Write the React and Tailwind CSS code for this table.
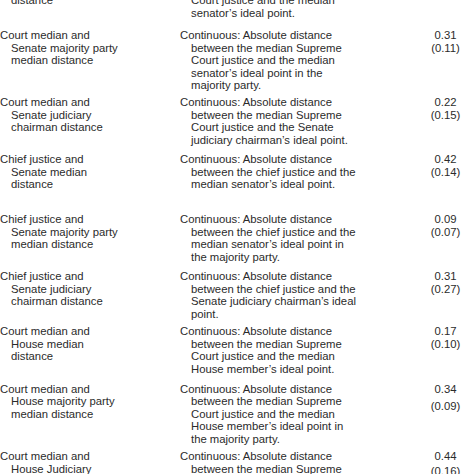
import React from 'react';

const rows = [
  {
    h: 'h-[60px]',
    label: ['Court median and', 'Senate median', 'distance'],
    desc: ['Continuous: Absolute distance', 'between the median Supreme', 'Court justice and the median', 'senator\u2019s ideal point.'],
    mean: '0.21',
    sd: '(0.12)',
  },
  {
    h: 'h-[67px]',
    label: ['Court median and', 'Senate majority party', 'median distance'],
    desc: ['Continuous: Absolute distance', 'between the median Supreme', 'Court justice and the median', 'senator\u2019s ideal point in the', 'majority party.'],
    mean: '0.31',
    sd: '(0.11)',
  },
  {
    h: 'h-[57px]',
    label: ['Court median and', 'Senate judiciary', 'chairman distance'],
    desc: ['Continuous: Absolute distance', 'between the median Supreme', 'Court justice and the Senate', 'judiciary chairman\u2019s ideal point.'],
    mean: '0.22',
    sd: '(0.15)',
  },
  {
    h: 'h-[60px]',
    label: ['Chief justice and', 'Senate median', 'distance'],
    desc: ['Continuous: Absolute distance', 'between the chief justice and the', 'median senator\u2019s ideal point.'],
    mean: '0.42',
    sd: '(0.14)',
  },
  {
    h: 'h-[57px]',
    label: ['Chief justice and', 'Senate majority party', 'median distance'],
    desc: ['Continuous: Absolute distance', 'between the chief justice and the', 'median senator\u2019s ideal point in', 'the majority party.'],
    mean: '0.09',
    sd: '(0.07)',
  },
  {
    h: 'h-[55px]',
    label: ['Chief justice and', 'Senate judiciary', 'chairman distance'],
    desc: ['Continuous: Absolute distance', 'between the chief justice and the', 'Senate judiciary chairman\u2019s ideal', 'point.'],
    mean: '0.31',
    sd: '(0.27)',
  },
  {
    h: 'h-[57.5px]',
    label: ['Court median and', 'House median', 'distance'],
    desc: ['Continuous: Absolute distance', 'between the median Supreme', 'Court justice and the median', 'House member\u2019s ideal point.'],
    mean: '0.17',
    sd: '(0.10)',
  },
  {
    h: 'h-[67.5px]',
    label: ['Court median and', 'House majority party', 'median distance'],
    desc: ['Continuous: Absolute distance', 'between the median Supreme', 'Court justice and the median', 'House member\u2019s ideal point in', 'the majority party.'],
    mean: '0.34',
    sd: '(0.09)',
    sdGap: 'mt-[5px]',
  },
  {
    h: 'h-[60px]',
    label: ['Court median and', 'House Judiciary', 'chairman distance'],
    desc: ['Continuous: Absolute distance', 'between the median Supreme', 'Court justice and the House', 'judiciary chairman\u2019s ideal point.'],
    mean: '0.44',
    sd: '(0.16)',
    sdGap: 'mt-[2px]',
  },
];

const Lines = ({ lines }) => (
  <div>
    {lines.map((line, i) => (
      <div key={i} className={i === 0 ? '' : 'pl-[11px]'}>
        {line}
      </div>
    ))}
  </div>
);

export default function App() {
  return (
    <div
      className="w-[474px] h-[474px] overflow-hidden bg-white text-[#2b2b2b] text-[11.3px] leading-[12.5px]"
      style={{ fontFamily: '"Liberation Sans", Arial, sans-serif' }}
    >
      <div className="-mt-[31px]">
        {rows.map((row, i) => (
          <div key={i} className={`grid grid-cols-[180px_238px_1fr] ${row.h}`}>
            <Lines lines={row.label} />
            <Lines lines={row.desc} />
            <div className="text-center pr-[1px]">
              <div>{row.mean}</div>
              <div className={row.sdGap || ''}>{row.sd}</div>
            </div>
          </div>
        ))}
      </div>
    </div>
  );
}
